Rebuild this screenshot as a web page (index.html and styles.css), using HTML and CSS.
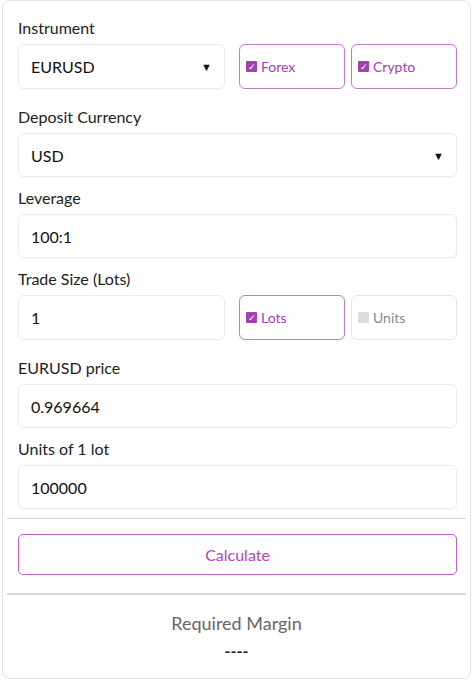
FILE: index.html
```html
<!DOCTYPE html>
<html>

<head>
    <title>Margin Calculator</title>
    <link rel="stylesheet" href="styles.css">
</head>

<body>
    <div class="card">
        <div class="card-body">
            <div class="field field-wide">
                <label class="field-label">Instrument</label>
                <div class="field-row">
                    <div class="control select">EURUSD <span class="caret">&#9660;</span></div>
                    <div class="toggle checked"><span class="box">&#10003;</span>Forex</div>
                    <div class="toggle checked"><span class="box">&#10003;</span>Crypto</div>
                </div>
            </div>

            <div class="field">
                <label class="field-label">Deposit Currency</label>
                <div class="control select">USD <span class="caret">&#9660;</span></div>
            </div>

            <div class="field">
                <label class="field-label">Leverage</label>
                <div class="control">100:1</div>
            </div>

            <div class="field field-wide">
                <label class="field-label">Trade Size (Lots)</label>
                <div class="field-row">
                    <div class="control">1</div>
                    <div class="toggle checked"><span class="box">&#10003;</span>Lots</div>
                    <div class="toggle"><span class="box"></span>Units</div>
                </div>
            </div>

            <div class="field">
                <label class="field-label">EURUSD price</label>
                <div class="control">0.969664</div>
            </div>

            <div class="field">
                <label class="field-label">Units of 1 lot</label>
                <div class="control">100000</div>
            </div>
        </div>

        <hr class="divider">

        <div class="actions">
            <button class="calc-button">Calculate</button>
        </div>

        <hr class="divider divider-dark">

        <div class="result">
            <div class="result-title">Required Margin</div>
            <div class="result-value">----</div>
        </div>
    </div>
</body>

</html>
```

FILE: styles.css
```css
body {
    margin: 0;
    padding: 0 3px 2px 2px;
    font-family: Lato, "Noto Sans", sans-serif;
    color: #222;
    background-color: #fff;
}

.card {
    border: 1px solid #e2e2e2;
    border-radius: 8px;
    height: 679px;
    box-sizing: border-box;
}

.card-body {
    padding: 15px 13px 0 15px;
}

.field {
    margin-bottom: 9px;
}

.field-wide {
    margin-bottom: 16px;
}

.field-label {
    display: block;
    font-size: 16px;
    line-height: 24px;
    margin-bottom: 4px;
}

.field-row {
    display: flex;
    gap: 6px;
}

.field-row .control {
    flex: 1;
    margin-right: 8px;
    height: 45px;
}

.control {
    display: flex;
    align-items: center;
    height: 44px;
    box-sizing: border-box;
    padding: 0 12px;
    border: 1px solid #ececec;
    border-radius: 6px;
    box-shadow: 0 1px 2px rgba(0, 0, 0, 0.04);
    font-size: 16px;
    color: #111;
}

.select {
    justify-content: space-between;
}

.caret {
    font-size: 11px;
}

.toggle {
    display: flex;
    align-items: center;
    width: 106px;
    height: 45px;
    box-sizing: border-box;
    padding: 0 6px;
    border: 1px solid #e4e4e4;
    border-radius: 6px;
    font-size: 14px;
    color: #888;
}

.toggle.checked {
    border-color: #c678c9;
    color: #a43fb0;
}

.box {
    display: inline-flex;
    align-items: center;
    justify-content: center;
    width: 11px;
    height: 11px;
    margin-right: 4px;
    background-color: #dcdde2;
    border-radius: 1px;
    font-size: 9px;
    color: #fff;
}

.toggle.checked .box {
    background-color: #a43fb0;
}

.divider {
    margin: 0 4px;
    border: none;
    border-top: 1px solid #d8d8d8;
}

.divider-dark {
    border-top: 2px solid #dadada;
}

.actions {
    padding: 15px 13px 18px 15px;
}

.calc-button {
    display: block;
    width: 100%;
    height: 41px;
    border: 1px solid #c35fc6;
    border-radius: 5px;
    background-color: #fff;
    color: #b048b8;
    font-family: Lato, "Noto Sans", sans-serif;
    font-size: 16px;
    cursor: pointer;
}

.result {
    text-align: center;
    padding-top: 16px;
}

.result-title {
    font-size: 18px;
    color: #666;
    line-height: 24px;
}

.result-value {
    font-size: 16px;
    font-weight: bold;
    color: #222;
    line-height: 32px;
}
```
